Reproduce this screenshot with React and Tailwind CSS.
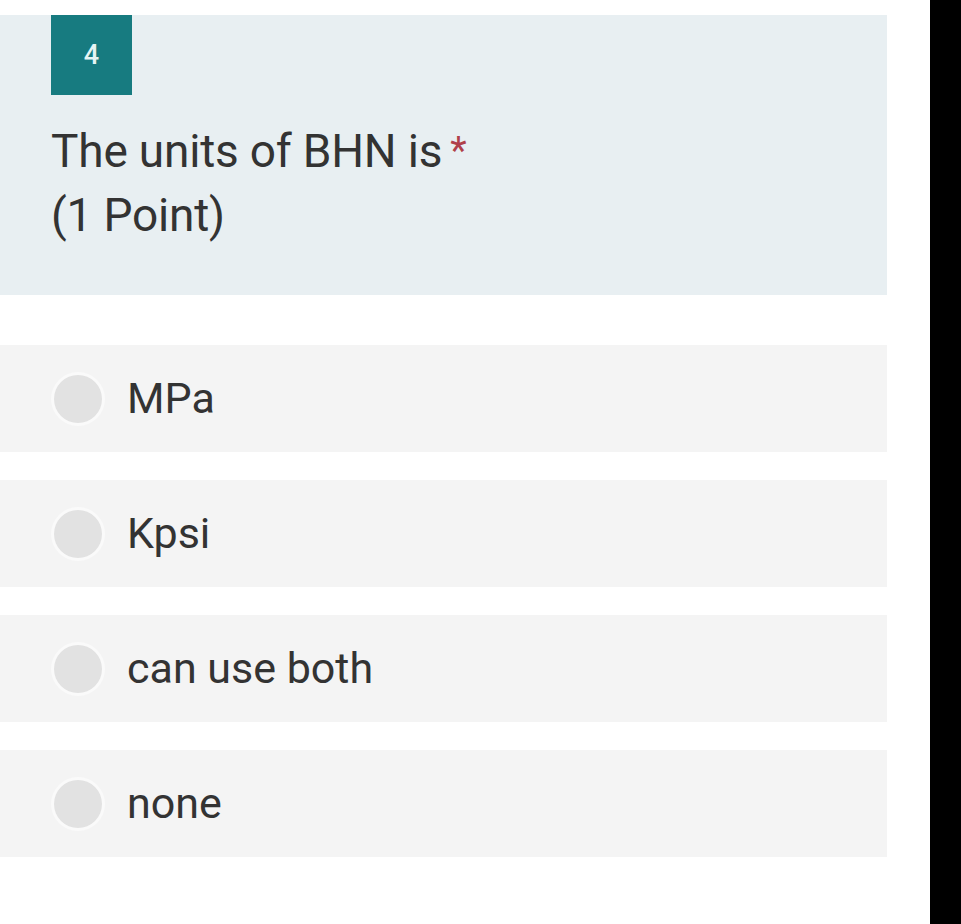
import React from 'react';

const options = ['MPa', 'Kpsi', 'can use both', 'none'];

const App = () => {
  return (
    <div className="flex w-[961px] h-[924px] bg-white overflow-hidden" style={{ fontFamily: 'Roboto, "Liberation Sans", sans-serif' }}>
      <div className="w-[930px] pt-[15px]">
        {/* Question header */}
        <div className="w-[887px] h-[280px] bg-[#e8eff2] pl-[51px]">
          <div className="w-[81px] h-[80px] bg-[#177b80] flex items-center justify-center text-[#e6f4f4] text-[27px] font-medium">
            4
          </div>
          <div className="mt-[24px] text-[#333] text-[46px] leading-[64px] tracking-[-0.2px]">
            <div>
              The units of BHN is<span className="ml-[8px] text-[#b0404a] text-[38px] align-top">*</span>
            </div>
            <div>(1 Point)</div>
          </div>
        </div>

        {/* Options */}
        <div className="mt-[50px] flex flex-col gap-[28px]">
          {options.map((opt) => (
            <div key={opt} className="w-[887px] h-[107px] bg-[#f4f4f4] flex items-center pl-[54px]">
              <div className="w-[48px] h-[48px] rounded-full bg-[#e2e2e2] shadow-[0_0_0_3px_#fafafa]" />
              <span className="ml-[25px] text-[#333] text-[43px]">{opt}</span>
            </div>
          ))}
        </div>
      </div>
      <div className="flex-1 bg-black" />
    </div>
  );
};

export default App;
